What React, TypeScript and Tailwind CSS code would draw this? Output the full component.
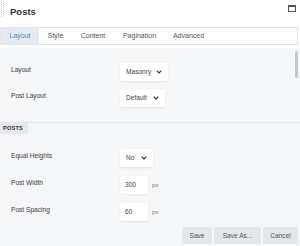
import React from "react";

const font = { fontFamily: '"Liberation Sans", Arial, sans-serif' };

function Chevron() {
  return (
    <svg width="6" height="4" viewBox="0 0 6 4" className="shrink-0">
      <path d="M0.7 0.7 L3 3 L5.3 0.7" fill="none" stroke="#333" strokeWidth="1.2" />
    </svg>
  );
}

function SelectBox({ value, width }: { value: string; width: string }) {
  return (
    <div
      className={`${width} h-[18px] bg-white rounded-[2px] shadow-[0_1px_2px_rgba(0,0,0,0.08)] flex items-center justify-between pl-[6px] pr-[6px] text-[6.6px] text-[#444]`}
    >
      <span>{value}</span>
      <Chevron />
    </div>
  );
}

function NumberBox({ value }: { value: string }) {
  return (
    <div className="flex items-center gap-[4px]">
      <div className="w-[28px] h-[18px] bg-white rounded-[2px] shadow-[0_1px_2px_rgba(0,0,0,0.08)] flex items-center pl-[5px] text-[6.6px] text-[#444]">
        {value}
      </div>
      <span className="text-[6.2px] text-[#777]">px</span>
    </div>
  );
}

function Row({ label, children, mt }: { label: string; children: React.ReactNode; mt: string }) {
  return (
    <div className={`flex items-start ${mt}`}>
      <div className="w-[120px] pl-[11px] pt-[3px] text-[6.6px] text-[#3a3a3a] leading-[8px]">{label}</div>
      {children}
    </div>
  );
}

const tabs = ["Layout", "Style", "Content", "Pagination", "Advanced"];
const tabWidths = ["w-[38px]", "w-[33px]", "w-[42px]", "w-[51px]", "w-[47px]"];

export default function App() {
  return (
    <div className="w-[300px] h-[246px] overflow-hidden bg-[#f5f6f8] relative flex flex-col" style={font}>
      <div className="bg-white h-[48px] flex flex-col">
        <div className="h-[27px] flex items-start relative">
          <svg width="4" height="18" viewBox="0 0 4 18" className="absolute left-[1px] top-0">
            {Array.from({ length: 9 }).map((_, i) => (
              <g key={i}>
                <rect x="0" y={i * 2} width="1" height="1" fill="#c9ccd0" />
                <rect x="2" y={i * 2 + 1} width="1" height="1" fill="#c9ccd0" />
              </g>
            ))}
          </svg>
          <div className="pl-[10px] pt-[6px] text-[9.5px] font-bold text-[#333] leading-[12px]">Posts</div>
          <div className="ml-auto mr-[4px] mt-[5px]">
            <svg width="8" height="7" viewBox="0 0 8 7">
              <rect x="0.5" y="0.5" width="7" height="6" fill="none" stroke="#555" strokeWidth="1" />
              <rect x="0" y="0" width="8" height="2" fill="#555" />
            </svg>
          </div>
        </div>
        <div className="h-[18px] mr-[2px] border border-[#e3e6e9] flex items-stretch">
          {tabs.map((t, i) => (
            <div
              key={t}
              className={`${tabWidths[i]} flex items-center justify-center text-[7px] ${
                i === 0 ? "bg-[#e4eaef] text-[#3b8bc0]" : "text-[#555]"
              }`}
            >
              {t}
            </div>
          ))}
        </div>
      </div>

      <div className="absolute right-[2px] top-[51px] w-[3px] h-[27px] rounded-full bg-[#c4c6c9]" />

      <Row label="Layout" mt="mt-[15px]">
        <SelectBox value="Masonry" width="w-[48px]" />
      </Row>
      <Row label="Post Layout" mt="mt-[8px]">
        <SelectBox value="Default" width="w-[45px]" />
      </Row>

      <div className="mt-[15px] border-t border-[#e3e5e8]" />
      <div className="w-[28px] h-[11px] bg-[#e6e8eb] flex items-center pl-[3px] text-[5.6px] font-bold text-[#333] tracking-[0.2px]">
        POSTS
      </div>

      <Row label="Equal Heights" mt="mt-[15px]">
        <SelectBox value="No" width="w-[33px]" />
      </Row>
      <Row label="Post Width" mt="mt-[9px]">
        <NumberBox value="300" />
      </Row>
      <Row label="Post Spacing" mt="mt-[9px]">
        <NumberBox value="60" />
      </Row>

      <div className="flex justify-end gap-[2px] mr-[2px] mt-[6px]">
        <button className="w-[30px] h-[17px] bg-[#e4e7ea] rounded-[2px] text-[6.6px] text-[#555]">Save</button>
        <button className="w-[47px] h-[17px] bg-[#e4e7ea] rounded-[2px] text-[6.6px] text-[#555]">Save As...</button>
        <button className="w-[35px] h-[17px] bg-[#e4e7ea] rounded-[2px] text-[6.6px] text-[#555]">Cancel</button>
      </div>
    </div>
  );
}
